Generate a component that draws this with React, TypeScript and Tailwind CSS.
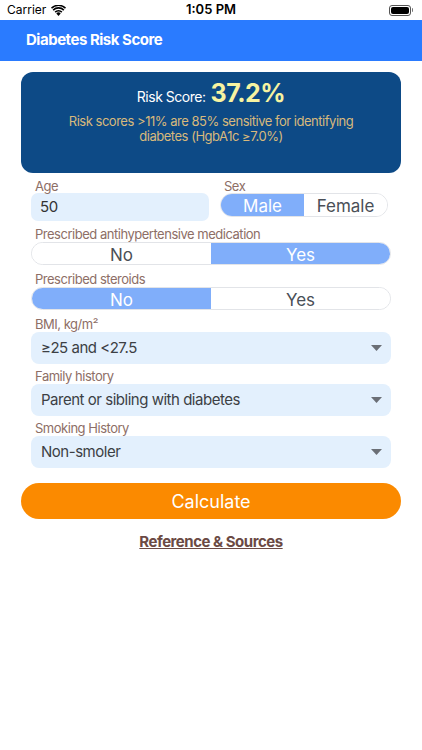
import { useState } from "react";

const font = { fontFamily: "Inter, 'Liberation Sans', sans-serif" };

function Label({ text }: { text: string }) {
  return (
    <div className="h-[15px] text-[13px] leading-[15px] text-[#8d6e66] pl-[4px]">
      {text}
    </div>
  );
}

function Segment({
  options,
  value,
  onChange,
  className,
}: {
  options: string[];
  value: number;
  onChange: (i: number) => void;
  className: string;
}) {
  return (
    <div
      className={`flex overflow-hidden rounded-full border border-[#e2e4e8] bg-white ${className}`}
    >
      {options.map((o, i) => (
        <button
          key={o}
          onClick={() => onChange(i)}
          className={
            i === value
              ? "flex-1 bg-[#80aefa] text-white text-[17px] tracking-normal"
              : "flex-1 bg-white text-[#4a4f57] text-[17px] tracking-normal"
          }
        >
          {o}
        </button>
      ))}
    </div>
  );
}

function Select({ value }: { value: string }) {
  return (
    <div className="flex items-center justify-between h-[32px] rounded-[8px] bg-[#e3f0fd] pl-[10px] pr-[9px]">
      <span className="text-[15px] text-[#3c3f44]">{value}</span>
      <svg width="11" height="6" viewBox="0 0 11 6">
        <path d="M0 0 H11 L5.5 6 Z" fill="#6b6f76" />
      </svg>
    </div>
  );
}

export default function App() {
  const [sex, setSex] = useState(0);
  const [htn, setHtn] = useState(1);
  const [ster, setSter] = useState(0);

  return (
    <div className="w-[422px] h-[750px] bg-white tracking-[-0.03em]" style={font}>
      {/* status bar */}
      <div className="relative h-[20px] flex items-center px-[7px]">
        <span className="text-[12px] text-black tracking-normal">Carrier</span>
        <svg className="ml-[5px]" width="15" height="11" viewBox="0 0 15 11">
          <path d="M7.5 11 L5.3 8.4 A3.2 3.2 0 0 1 9.7 8.4 Z" fill="#000" />
          <path d="M3.6 6.6 A5.6 5.6 0 0 1 11.4 6.6 L10.3 7.8 A4 4 0 0 0 4.7 7.8 Z" fill="#000" />
          <path d="M1.6 4.5 A8.4 8.4 0 0 1 13.4 4.5 L12.3 5.7 A6.8 6.8 0 0 0 2.7 5.7 Z" fill="#000" />
          <path d="M0 2.6 A10.8 10.8 0 0 1 15 2.6 L14 3.7 A9.4 9.4 0 0 0 1 3.7 Z" fill="#000" />
        </svg>
        <span className="absolute left-0 right-0 text-center text-[13px] font-semibold text-black tracking-normal pointer-events-none">
          1:05 PM
        </span>
        <div className="ml-auto flex items-center mr-[2px]">
          <div className="w-[22px] h-[11px] rounded-[3px] border border-[#555] p-[1px]">
            <div className="w-full h-full rounded-[2px] bg-black" />
          </div>
          <div className="w-[1.5px] h-[4px] bg-[#777] rounded-r ml-[1px]" />
        </div>
      </div>

      {/* nav bar */}
      <div className="h-[41px] bg-[#2a7bff] flex items-center pl-[26px]">
        <span className="text-white text-[15px] font-bold">Diabetes Risk Score</span>
      </div>

      <div className="px-[21px]">
        {/* result card */}
        <div className="mt-[11px] h-[101px] rounded-[12px] bg-[#0d4a86] flex flex-col items-center pt-[6px]">
          <div className="flex items-baseline gap-[5px]">
            <span className="text-white text-[14px]">Risk Score:</span>
            <span className="text-[#f7f3a1] text-[25px] font-bold leading-[30px]">37.2%</span>
          </div>
          <div className="mt-[6px] text-[#d8b97c] text-[13px] leading-[15px] text-center px-[40px]">
            Risk scores &gt;11% are 85% sensitive for identifying diabetes (HgbA1c ≥7.0%)
          </div>
        </div>

        {/* form */}
        <div className="px-[10px] mt-[6px]">
          <div className="flex">
            <div className="w-[178px]">
              <Label text="Age" />
              <div className="mt-[-1px] h-[28px] rounded-[7px] bg-[#e3f0fd] flex items-center pl-[9px] text-[15px] text-[#333]">
                50
              </div>
            </div>
            <div className="w-[168px] ml-[11px]">
              <Label text="Sex" />
              <Segment
                options={["Male", "Female"]}
                value={sex}
                onChange={setSex}
                className="h-[24px] -mt-[1px]"
              />
            </div>
          </div>

          <div className="mt-[6px]">
            <Label text="Prescribed antihypertensive medication" />
            <Segment
              options={["No", "Yes"]}
              value={htn}
              onChange={setHtn}
              className="h-[23px]"
            />
          </div>

          <div className="mt-[7px]">
            <Label text="Prescribed steroids" />
            <Segment
              options={["No", "Yes"]}
              value={ster}
              onChange={setSter}
              className="h-[23px]"
            />
          </div>

          <div className="mt-[7px]">
            <Label text="BMI, kg/m²" />
            <Select value="≥25 and <27.5" />
          </div>

          <div className="mt-[5px]">
            <Label text="Family history" />
            <Select value="Parent or sibling with diabetes" />
          </div>

          <div className="mt-[5px]">
            <Label text="Smoking History" />
            <Select value="Non-smoler" />
          </div>
        </div>

        <button className="mt-[15px] w-full h-[36px] rounded-full bg-[#fb8a00] text-white text-[18px] tracking-normal">
          Calculate
        </button>

        <div className="mt-[10px] text-center">
          <span className="text-[15px] font-bold underline text-[#6b4a44]">
            Reference &amp; Sources
          </span>
        </div>
      </div>
    </div>
  );
}
